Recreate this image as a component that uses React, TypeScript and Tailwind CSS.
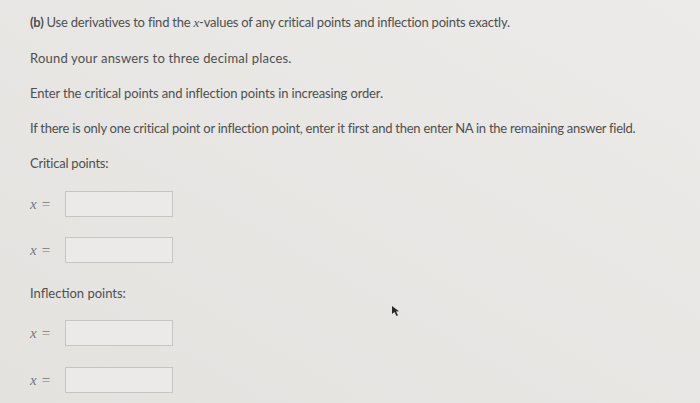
import React from "react";

function Field() {
  return (
    <div className="flex items-center h-[26px]">
      <div className="w-[35px] text-[15px] leading-none text-[#767676]" style={{ fontFamily: '"Liberation Serif", serif' }}>
        <span className="italic">x</span>
        <span className="ml-[5px]">=</span>
      </div>
      <div className="w-[108px] h-[26px] border border-[#c6c5c3] bg-[#ebeae8]" />
    </div>
  );
}

export default function App() {
  return (
    <div
      className="relative w-[700px] h-[403px] overflow-hidden bg-gradient-to-bl from-[#ecebe9] to-[#e3e2df] text-[#4f4f4f] pl-[30px] pt-[12px]"
      style={{ fontFamily: 'Lato, "Open Sans", sans-serif' }}
    >
      <div className="flex flex-col gap-[15px] text-[13px] leading-[20px] tracking-[-0.22px]">
        <p>
          <span className="font-bold">(b)</span> Use derivatives to find the{" "}
          <span className="italic" style={{ fontFamily: '"Liberation Serif", serif' }}>x</span>-values of any critical points and inflection points exactly.
        </p>
        <p className="tracking-[0.2px]">Round your answers to three decimal places.</p>
        <p className="tracking-[-0.14px]">Enter the critical points and inflection points in increasing order.</p>
        <p className="tracking-[-0.26px]">If there is only one critical point or inflection point, enter it first and then enter NA in the remaining answer field.</p>
        <p>Critical points:</p>
      </div>
      <div className="mt-[18px] flex flex-col gap-[20px]">
        <Field />
        <Field />
      </div>
      <p className="mt-[20px] text-[13px] leading-[20px]">Inflection points:</p>
      <div className="mt-[17px] flex flex-col gap-[21px]">
        <Field />
        <Field />
      </div>
      <svg className="absolute left-[391px] top-[305px]" width="10" height="12" viewBox="0 0 10 12">
        <path d="M1 1 L1 9 L3.5 7 L5.5 11 L7 10.3 L5 6.5 L8 6.3 Z" fill="#2a2a2a" />
      </svg>
    </div>
  );
}
